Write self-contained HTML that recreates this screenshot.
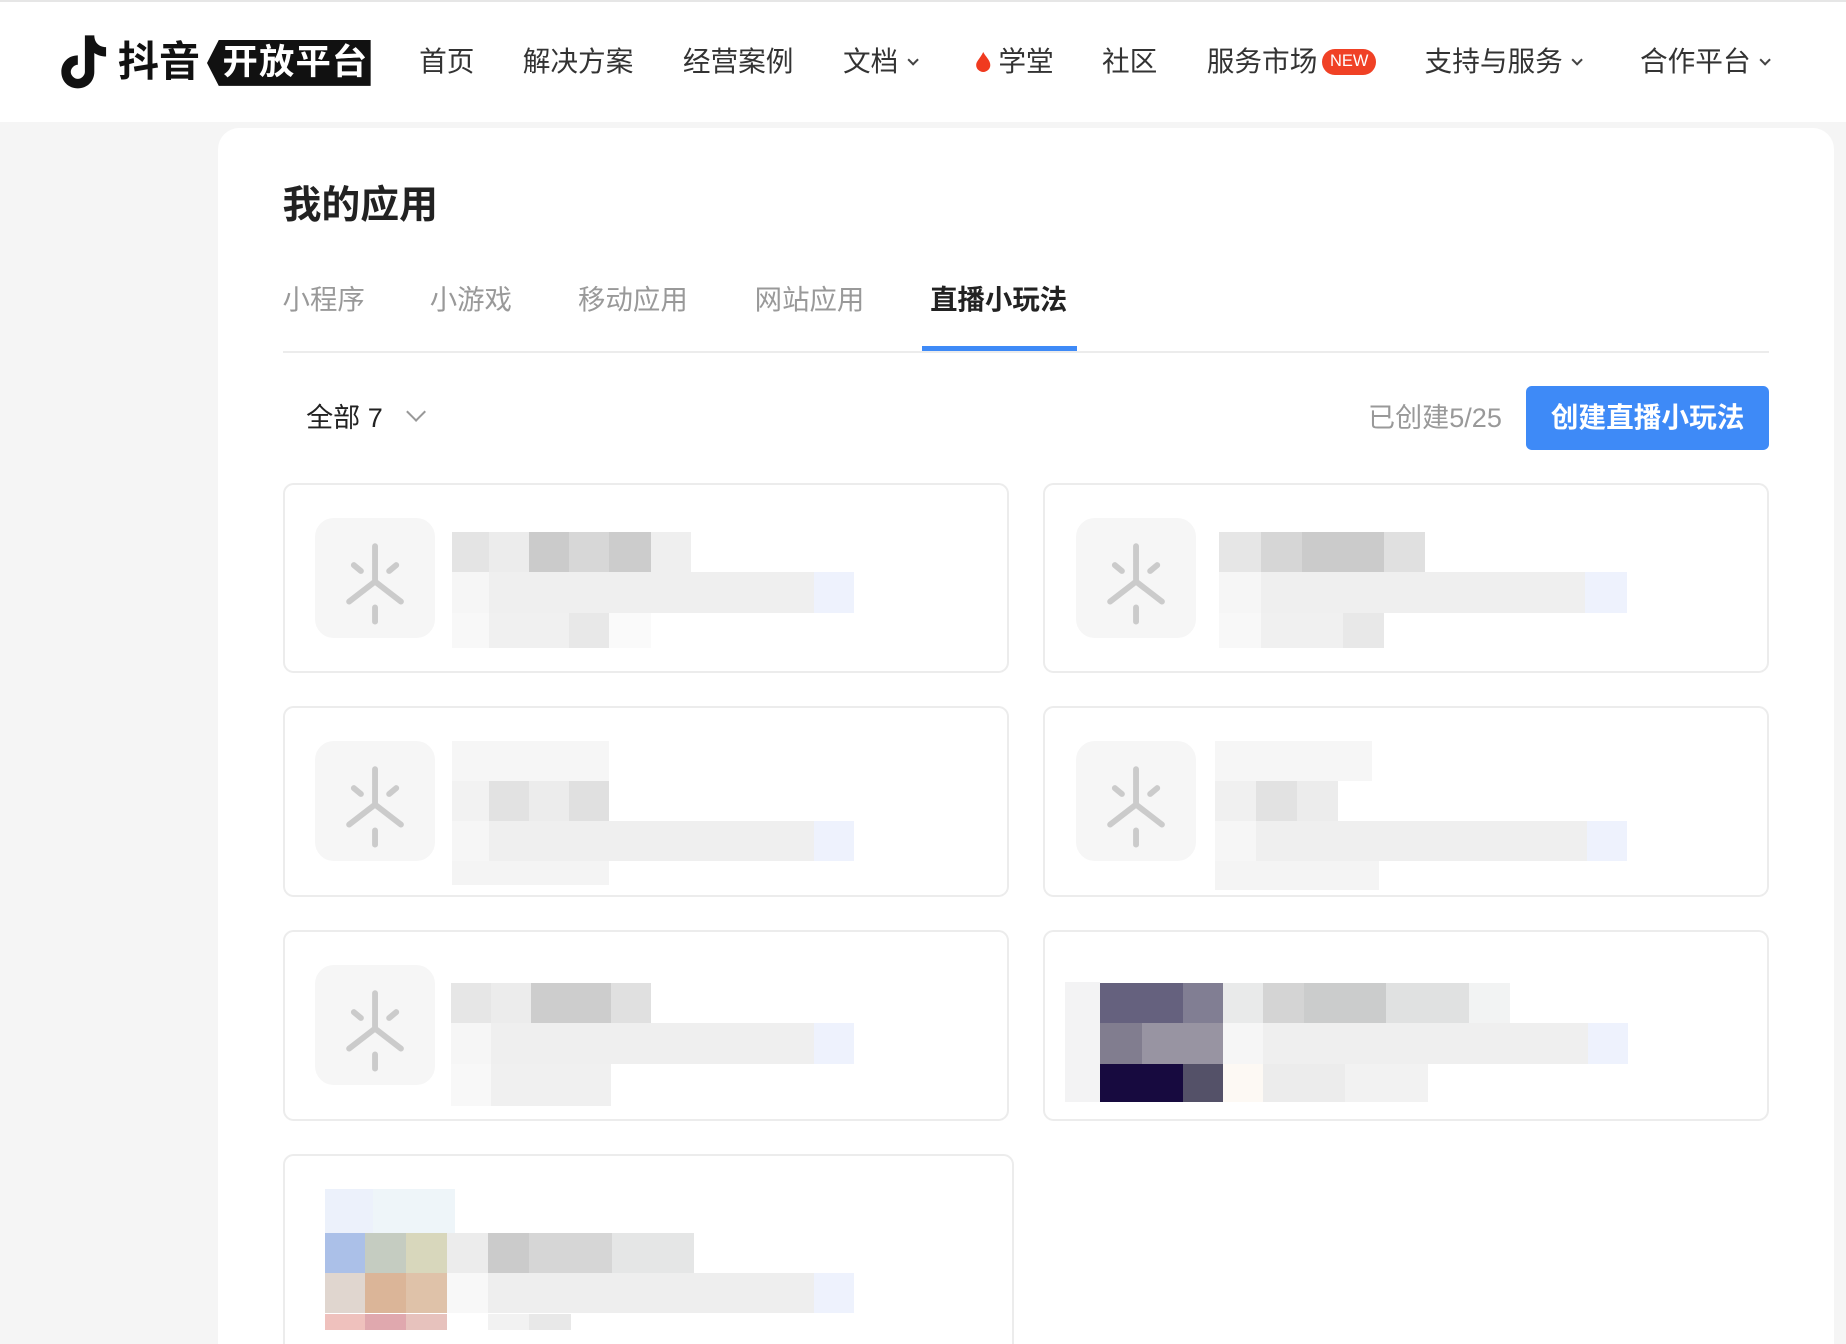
<!DOCTYPE html>
<html><head><meta charset="utf-8">
<style>
html{zoom:1.17730;overflow:hidden;height:1142px}
*{margin:0;padding:0;box-sizing:border-box}
body{width:1568px;height:1142px;overflow:hidden;background:#f5f5f5;font-family:"Liberation Sans","Noto Sans CJK SC",sans-serif;position:relative;color:#222}
.a{position:absolute}
.hdr{left:0;top:0;width:1568px;height:104px;background:#fff;border-top:2px solid #e6e6e6}
.nav{top:34px;font-size:23.5px;color:#333;white-space:nowrap;line-height:38px}
.chev{display:inline-block;width:7px;height:7px;border-right:2px solid #444;border-bottom:2px solid #444;transform:rotate(45deg);margin-left:9px;vertical-align:6px}
.panel{left:185px;top:109px;width:1373px;height:1033px;background:#fff;border-radius:18px 18px 0 0}
.tab{top:237px;font-size:23.3px;color:#999;line-height:36px}
.card{width:617px;height:162px;border:2px solid #ececec;border-radius:9px;background:#fff;overflow:hidden}
.ib{left:26px;top:28px;width:102px;height:102px;background:#f6f6f6;border-radius:16px}
.b{position:absolute}
</style></head><body>
<div class="a hdr"></div>
<svg class="a" style="left:50px;top:28px" width="46" height="50" viewBox="0 0 46 50">
<path d="M22 2h8c0 6 4 10 10 10v8c-4 0-7-1-10-3v16c0 8-6 14-14 14S2 41 2 33s6-14 14-14v8c-3 0-6 3-6 6s3 6 6 6 6-3 6-6z" fill="#111"/>
</svg>
<div class="a" style="left:100px;top:30px;font-size:35px;font-weight:bold;color:#111;line-height:46px">抖音</div>
<svg class="a" style="left:176px;top:34px" width="139" height="39"><polygon points="10,0 139,0 139,39 10,39 0,19.5" fill="#111"/></svg>
<div class="a" style="left:189px;top:34px;font-size:30px;font-weight:bold;color:#fff;line-height:39px;letter-spacing:1px">开放平台</div>
<div class="a nav" style="left:356px">首页</div>
<div class="a nav" style="left:444px">解决方案</div>
<div class="a nav" style="left:580px">经营案例</div>
<div class="a nav" style="left:716px">文档<span class="chev"></span></div>
<svg class="a" style="left:828px;top:44px" width="14" height="18" viewBox="0 0 14 18"><path d="M7 0C9 4 13 7 13 11a6 6 0 0 1-12 0C1 8 4 6 7 0z" fill="#f03a1f"/></svg>
<div class="a nav" style="left:848px">学堂</div>
<div class="a nav" style="left:936px">社区</div>
<div class="a nav" style="left:1025px">服务市场</div>
<div class="a" style="left:1123px;top:42px;width:46px;height:22px;border-radius:11px;background:#f04125;color:#fff;font-size:14px;line-height:22px;text-align:center">NEW</div>
<div class="a nav" style="left:1210px">支持与服务<span class="chev"></span></div>
<div class="a nav" style="left:1393px">合作平台<span class="chev"></span></div>

<div class="a panel"></div>
<div class="a" style="left:240px;top:153px;font-size:33px;font-weight:bold;color:#222;line-height:44px">我的应用</div>
<div class="a tab" style="left:240px">小程序</div>
<div class="a tab" style="left:365px">小游戏</div>
<div class="a tab" style="left:491px">移动应用</div>
<div class="a tab" style="left:641px">网站应用</div>
<div class="a tab" style="left:790px;color:#222;font-weight:bold">直播小玩法</div>
<div class="a" style="left:240px;top:298px;width:1263px;height:2px;background:#ececec"></div>
<div class="a" style="left:783px;top:294px;width:132px;height:4px;background:#3e8af7"></div>
<div class="a" style="left:260px;top:337px;font-size:23px;line-height:36px;color:#222">全部 7</div>
<div class="a" style="left:347px;top:344px;width:12px;height:12px;border-right:2.5px solid #999;border-bottom:2.5px solid #999;transform:rotate(45deg)"></div>
<div class="a" style="left:1162px;top:337px;font-size:23px;line-height:36px;color:#999">已创建5/25</div>
<div class="a" style="left:1296px;top:328px;width:207px;height:54px;background:#3e8af7;border-radius:5px;color:#fff;font-size:23.5px;font-weight:bold;line-height:54px;text-align:center">创建直播小玩法</div>

<div class="a card" style="left:240px;top:410px">
 <div class="a ib"><svg width="102" height="102" viewBox="0 0 102 102"><g stroke="#cbcbcb" stroke-width="5" stroke-linecap="round" fill="none"><path d="M51 24v30M51 54L29 71M51 54l22 17M51 76v12M33 40l6 5M69 40l-6 5"/></g></svg></div>
 <div class="b" style="left:142px;top:40px;width:32px;height:34px;background:#e4e4e4"></div><div class="b" style="left:174px;top:40px;width:34px;height:34px;background:#ececec"></div><div class="b" style="left:208px;top:40px;width:34px;height:34px;background:#cbcbcb"></div><div class="b" style="left:242px;top:40px;width:34px;height:34px;background:#d7d7d7"></div><div class="b" style="left:276px;top:40px;width:35px;height:34px;background:#cccccc"></div><div class="b" style="left:311px;top:40px;width:34px;height:34px;background:#efefef"></div>
 <div class="b" style="left:142px;top:74px;width:32px;height:35px;background:#f6f6f6"></div><div class="b" style="left:174px;top:74px;width:276px;height:35px;background:#efefef"></div><div class="b" style="left:450px;top:74px;width:34px;height:35px;background:#eef2fd"></div>
 <div class="b" style="left:142px;top:109px;width:32px;height:30px;background:#f8f8f8"></div><div class="b" style="left:174px;top:109px;width:68px;height:30px;background:#f0f0f0"></div><div class="b" style="left:242px;top:109px;width:34px;height:30px;background:#e8e8e8"></div><div class="b" style="left:276px;top:109px;width:35px;height:30px;background:#fafafa"></div>
</div>
<div class="a card" style="left:886px;top:410px">
 <div class="a ib"><svg width="102" height="102" viewBox="0 0 102 102"><g stroke="#cbcbcb" stroke-width="5" stroke-linecap="round" fill="none"><path d="M51 24v30M51 54L29 71M51 54l22 17M51 76v12M33 40l6 5M69 40l-6 5"/></g></svg></div>
 <div class="b" style="left:148px;top:40px;width:35px;height:34px;background:#e6e6e6"></div><div class="b" style="left:183px;top:40px;width:35px;height:34px;background:#d6d6d6"></div><div class="b" style="left:218px;top:40px;width:70px;height:34px;background:#cbcbcb"></div><div class="b" style="left:288px;top:40px;width:35px;height:34px;background:#e0e0e0"></div>
 <div class="b" style="left:148px;top:74px;width:35px;height:35px;background:#f6f6f6"></div><div class="b" style="left:183px;top:74px;width:276px;height:35px;background:#efefef"></div><div class="b" style="left:459px;top:74px;width:35px;height:35px;background:#eef2fd"></div>
 <div class="b" style="left:148px;top:109px;width:35px;height:30px;background:#f8f8f8"></div><div class="b" style="left:183px;top:109px;width:70px;height:30px;background:#f0f0f0"></div><div class="b" style="left:253px;top:109px;width:35px;height:30px;background:#e8e8e8"></div>
</div>
<div class="a card" style="left:240px;top:600px">
 <div class="a ib"><svg width="102" height="102" viewBox="0 0 102 102"><g stroke="#cbcbcb" stroke-width="5" stroke-linecap="round" fill="none"><path d="M51 24v30M51 54L29 71M51 54l22 17M51 76v12M33 40l6 5M69 40l-6 5"/></g></svg></div>
 <div class="b" style="left:142px;top:28px;width:134px;height:34px;background:#f6f6f6"></div>
 <div class="b" style="left:142px;top:62px;width:32px;height:34px;background:#f2f2f2"></div><div class="b" style="left:174px;top:62px;width:34px;height:34px;background:#e2e2e2"></div><div class="b" style="left:208px;top:62px;width:34px;height:34px;background:#ececec"></div><div class="b" style="left:242px;top:62px;width:34px;height:34px;background:#e0e0e0"></div>
 <div class="b" style="left:142px;top:96px;width:32px;height:34px;background:#f6f6f6"></div><div class="b" style="left:174px;top:96px;width:276px;height:34px;background:#efefef"></div><div class="b" style="left:450px;top:96px;width:34px;height:34px;background:#eef2fd"></div>
 <div class="b" style="left:142px;top:130px;width:134px;height:20px;background:#f4f4f4"></div>
</div>
<div class="a card" style="left:886px;top:600px">
 <div class="a ib"><svg width="102" height="102" viewBox="0 0 102 102"><g stroke="#cbcbcb" stroke-width="5" stroke-linecap="round" fill="none"><path d="M51 24v30M51 54L29 71M51 54l22 17M51 76v12M33 40l6 5M69 40l-6 5"/></g></svg></div>
 <div class="b" style="left:144px;top:28px;width:134px;height:34px;background:#f6f6f6"></div>
 <div class="b" style="left:144px;top:62px;width:35px;height:34px;background:#f0f0f0"></div><div class="b" style="left:179px;top:62px;width:35px;height:34px;background:#e2e2e2"></div><div class="b" style="left:214px;top:62px;width:35px;height:34px;background:#ececec"></div>
 <div class="b" style="left:144px;top:96px;width:35px;height:34px;background:#f6f6f6"></div><div class="b" style="left:179px;top:96px;width:281px;height:34px;background:#efefef"></div><div class="b" style="left:460px;top:96px;width:34px;height:34px;background:#eef2fd"></div>
 <div class="b" style="left:144px;top:130px;width:140px;height:24px;background:#f4f4f4"></div>
</div>
<div class="a card" style="left:240px;top:790px">
 <div class="a ib"><svg width="102" height="102" viewBox="0 0 102 102"><g stroke="#cbcbcb" stroke-width="5" stroke-linecap="round" fill="none"><path d="M51 24v30M51 54L29 71M51 54l22 17M51 76v12M33 40l6 5M69 40l-6 5"/></g></svg></div>
 <div class="b" style="left:141px;top:43px;width:34px;height:34px;background:#e6e6e6"></div><div class="b" style="left:175px;top:43px;width:34px;height:34px;background:#ececec"></div><div class="b" style="left:209px;top:43px;width:68px;height:34px;background:#cdcdcd"></div><div class="b" style="left:277px;top:43px;width:34px;height:34px;background:#e0e0e0"></div>
 <div class="b" style="left:141px;top:77px;width:34px;height:35px;background:#f6f6f6"></div><div class="b" style="left:175px;top:77px;width:275px;height:35px;background:#efefef"></div><div class="b" style="left:450px;top:77px;width:34px;height:35px;background:#eef2fd"></div>
 <div class="b" style="left:141px;top:112px;width:34px;height:36px;background:#f8f8f8"></div><div class="b" style="left:175px;top:112px;width:102px;height:36px;background:#f0f0f0"></div>
</div>
<div class="a card" style="left:886px;top:790px">
 <div class="b" style="left:17px;top:42px;width:30px;height:102px;background:#f3f3f4"></div>
 <div class="b" style="left:47px;top:43px;width:70px;height:34px;background:#65617e"></div><div class="b" style="left:117px;top:43px;width:34px;height:34px;background:#817e93"></div>
 <div class="b" style="left:47px;top:77px;width:35px;height:35px;background:#817d8f"></div><div class="b" style="left:82px;top:77px;width:69px;height:35px;background:#9894a2"></div>
 <div class="b" style="left:47px;top:112px;width:70px;height:32px;background:#170a3f"></div><div class="b" style="left:117px;top:112px;width:34px;height:32px;background:#545168"></div>
 <div class="b" style="left:151px;top:43px;width:34px;height:34px;background:#e9eaea"></div><div class="b" style="left:185px;top:43px;width:35px;height:34px;background:#d4d4d4"></div><div class="b" style="left:220px;top:43px;width:70px;height:34px;background:#cbcccc"></div><div class="b" style="left:290px;top:43px;width:70px;height:34px;background:#e0e1e1"></div><div class="b" style="left:360px;top:43px;width:35px;height:34px;background:#f2f3f3"></div>
 <div class="b" style="left:151px;top:77px;width:34px;height:35px;background:#f6f6f6"></div><div class="b" style="left:185px;top:77px;width:276px;height:35px;background:#efefef"></div><div class="b" style="left:461px;top:77px;width:34px;height:35px;background:#eef2fd"></div>
 <div class="b" style="left:151px;top:112px;width:34px;height:32px;background:#fdf9f4"></div><div class="b" style="left:185px;top:112px;width:70px;height:32px;background:#ececec"></div><div class="b" style="left:255px;top:112px;width:70px;height:32px;background:#f2f2f2"></div>
</div>
<div class="a card" style="left:240px;top:980px;width:621px;height:180px">
 <div class="b" style="left:34px;top:28px;width:41px;height:38px;background:#ecf1fb"></div><div class="b" style="left:75px;top:28px;width:70px;height:38px;background:#eef5f9"></div>
 <div class="b" style="left:34px;top:66px;width:34px;height:34px;background:#abc0e8"></div><div class="b" style="left:68px;top:66px;width:35px;height:34px;background:#c5ccc1"></div><div class="b" style="left:103px;top:66px;width:35px;height:34px;background:#d8d7bc"></div>
 <div class="b" style="left:34px;top:100px;width:34px;height:34px;background:#e0d6cf"></div><div class="b" style="left:68px;top:100px;width:35px;height:34px;background:#dbb598"></div><div class="b" style="left:103px;top:100px;width:35px;height:34px;background:#dfc2a9"></div>
 <div class="b" style="left:34px;top:134px;width:34px;height:14px;background:#efc1bd"></div><div class="b" style="left:68px;top:134px;width:35px;height:14px;background:#e0a8ae"></div><div class="b" style="left:103px;top:134px;width:35px;height:14px;background:#e7c2bd"></div>
 <div class="b" style="left:138px;top:66px;width:35px;height:34px;background:#ececec"></div><div class="b" style="left:173px;top:66px;width:35px;height:34px;background:#cbcbcb"></div><div class="b" style="left:208px;top:66px;width:70px;height:34px;background:#d6d6d6"></div><div class="b" style="left:278px;top:66px;width:70px;height:34px;background:#e5e6e6"></div>
 <div class="b" style="left:138px;top:100px;width:35px;height:34px;background:#f8f8f8"></div><div class="b" style="left:173px;top:100px;width:277px;height:34px;background:#eeeeee"></div><div class="b" style="left:450px;top:100px;width:34px;height:34px;background:#eef2fd"></div>
 <div class="b" style="left:173px;top:134px;width:35px;height:14px;background:#f2f2f2"></div><div class="b" style="left:208px;top:134px;width:35px;height:14px;background:#e8e8e8"></div>
</div>
</body></html>
